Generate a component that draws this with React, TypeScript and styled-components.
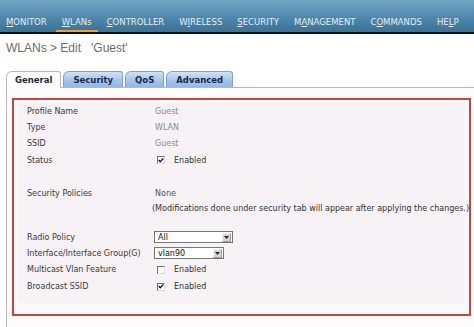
import styled, { createGlobalStyle } from "styled-components";

const GlobalStyle = createGlobalStyle`
  html, body {
    margin: 0;
    padding: 0;
    background: #ffffff;
  }
  body {
    width: 474px;
    height: 327px;
    overflow: hidden;
    font-family: "DejaVu Sans", Verdana, sans-serif;
  }
`;

const navItems = [
  { label: "MONITOR", key: 0 },
  { label: "WLANs", key: 0, active: true },
  { label: "CONTROLLER", key: 0 },
  { label: "WIRELESS", key: 1 },
  { label: "SECURITY", key: 0 },
  { label: "MANAGEMENT", key: 1 },
  { label: "COMMANDS", key: 1 },
  { label: "HELP", key: 2 },
];

const tabs = ["General", "Security", "QoS", "Advanced"];

function Checkbox({ checked }: { checked?: boolean }) {
  return (
    <Box>
      {checked && (
        <svg width="7" height="7" viewBox="0 0 7 7">
          <path d="M0.8 3 L2.6 4.9 L6.3 1" fill="none" stroke="#111" strokeWidth="1.6" />
        </svg>
      )}
    </Box>
  );
}

function Select({ value, width }: { value: string; width: number }) {
  return (
    <SelectBox style={{ width }}>
      <SelectText>{value}</SelectText>
      <SelectArrow>
        <svg width="5" height="3" viewBox="0 0 5 3">
          <path d="M0 0 H5 L2.5 3 Z" fill="#222" />
        </svg>
      </SelectArrow>
    </SelectBox>
  );
}

export default function App() {
  return (
    <>
      <GlobalStyle />
      <Header>
        {navItems.map(({ label, key, active }) => (
          <NavItem key={label} $active={!!active}>
            {label.slice(0, key)}
            <U>{label[key]}</U>
            {label.slice(key + 1)}
          </NavItem>
        ))}
      </Header>

      <Title>WLANs &gt; Edit&nbsp;&nbsp;&nbsp;'Guest'</Title>

      <Content>
        <TabRow>
          {tabs.map((t, i) => (
            <Tab key={t} $active={i === 0}>
              {t}
            </Tab>
          ))}
        </TabRow>

        <Panel>
          <RedBox>
            <Form>
              <Row $h={16}>
                <Label>Profile Name</Label>
                <Value $tone="light">Guest</Value>
              </Row>
              <Row $h={16}>
                <Label>Type</Label>
                <Value $tone="light">WLAN</Value>
              </Row>
              <Row $h={16}>
                <Label>SSID</Label>
                <Value $tone="light">Guest</Value>
              </Row>
              <Row $h={18}>
                <Label>Status</Label>
                <CheckValue>
                  <Checkbox checked />
                  <span>Enabled</span>
                </CheckValue>
              </Row>
              <Spacer $h={16} />
              <Row $h={16}>
                <Label>Security Policies</Label>
                <Value $tone="mid">None</Value>
              </Row>
              <Row $h={15}>
                <Label />
                <Note>
                  (Modifications done under security tab will appear after applying the changes.)
                </Note>
              </Row>
              <Spacer $h={13} />
              <Row $h={16}>
                <Label>Radio Policy</Label>
                <Select value="All" width={79} />
              </Row>
              <Row $h={16}>
                <Label>Interface/Interface Group(G)</Label>
                <Select value="vlan90" width={70} />
              </Row>
              <Row $h={17}>
                <Label>Multicast Vlan Feature</Label>
                <CheckValue>
                  <Checkbox />
                  <span>Enabled</span>
                </CheckValue>
              </Row>
              <Row $h={17}>
                <Label>Broadcast SSID</Label>
                <CheckValue>
                  <Checkbox checked />
                  <span>Enabled</span>
                </CheckValue>
              </Row>
            </Form>
          </RedBox>
        </Panel>
      </Content>
    </>
  );
}

const Header = styled.header`
  height: 32px;
  display: flex;
  align-items: flex-end;
  overflow: hidden;
  white-space: nowrap;
  background: linear-gradient(#72a6c6 0%, #4f88ac 55%, #3a7298 100%);
  border-bottom: 2px solid #111;
`;

const NavItem = styled.div<{ $active: boolean }>`
  padding: 0 6px 3px;
  margin-right: 3px;
  font-size: 8.5px;
  line-height: 10px;
  color: #e4edf3;
  border-bottom: 2px solid ${({ $active }) => ($active ? "#e9a23f" : "transparent")};
`;

const U = styled.span`
  text-decoration: underline;
`;

const Title = styled.div`
  margin: 6px 0 0 6px;
  height: 16px;
  line-height: 16px;
  font-family: "Liberation Sans", Arial, sans-serif;
  font-size: 12px;
  color: #6b6b6b;
`;

const Content = styled.div`
  margin: 15px 0 0 6px;
`;

const TabRow = styled.div`
  display: flex;
  gap: 2px;
  height: 16px;
  border-bottom: 1px solid #b8b8b8;
`;

const Tab = styled.div<{ $active: boolean }>`
  box-sizing: border-box;
  height: ${({ $active }) => ($active ? "17px" : "16px")};
  padding: 2px ${({ $active }) => ($active ? "8px" : "9px")} 0;
  font-size: 8.5px;
  font-weight: bold;
  line-height: 13px;
  color: #1a2846;
  border: 1px solid ${({ $active }) => ($active ? "#b8b8b8" : "#7fa2cc")};
  border-bottom: none;
  border-radius: 6px 3px 0 0;
  background: ${({ $active }) =>
    $active ? "#ffffff" : "linear-gradient(#cfe2f7, #a2c3eb 60%, #93b8e6)"};
`;

const Panel = styled.div`
  height: 240px;
  padding: 10px 0 0 5px;
  border-left: 1px solid #b8b8b8;
  background: #fdfbfc;
`;

const RedBox = styled.div`
  box-sizing: border-box;
  width: 459px;
  padding: 3px 4px 11px;
  border: 2px solid #c3473d;
  background: #fbf8fa;
`;

const Form = styled.div`
  padding: 0 0 8px 9px;
  background: #f6f2f5;
`;

const Row = styled.div<{ $h: number }>`
  display: grid;
  grid-template-columns: 128px 1fr;
  align-items: center;
  height: ${({ $h }) => $h}px;
  font-size: 8px;
  white-space: nowrap;
`;

const Spacer = styled.div<{ $h: number }>`
  height: ${({ $h }) => $h}px;
`;

const Label = styled.div`
  color: #3a3a3a;
`;

const Value = styled.div<{ $tone: "light" | "mid" }>`
  color: ${({ $tone }) => ($tone === "light" ? "#8c8c8c" : "#555555")};
`;

const Note = styled.div`
  margin-left: -3px;
  color: #333333;
`;

const CheckValue = styled.div`
  display: flex;
  align-items: center;
  gap: 9px;
  padding-left: 2px;
  color: #333333;
`;

const Box = styled.span`
  box-sizing: border-box;
  width: 8px;
  height: 8px;
  display: inline-flex;
  align-items: center;
  justify-content: center;
  background: #ffffff;
  border: 1px solid;
  border-color: #6f6f6f #dcdcdc #dcdcdc #6f6f6f;
`;

const SelectBox = styled.div`
  box-sizing: border-box;
  height: 12px;
  margin-left: -1px;
  display: flex;
  align-items: center;
  justify-content: space-between;
  border: 1px solid #777777;
  background: #ffffff;
`;

const SelectText = styled.span`
  padding-left: 3px;
  font-size: 8px;
  color: #111111;
`;

const SelectArrow = styled.span`
  box-sizing: border-box;
  width: 9px;
  height: 9px;
  margin-right: 1px;
  display: inline-flex;
  align-items: center;
  justify-content: center;
  background: #d6d6d6;
  border: 1px solid #f4f4f4;
  border-right-color: #9a9a9a;
  border-bottom-color: #9a9a9a;
`;
